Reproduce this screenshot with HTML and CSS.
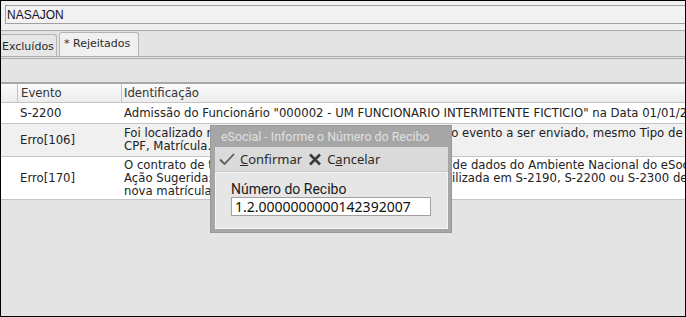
FILE: index.html
```html
<!DOCTYPE html>
<html lang="pt-BR">
  <head>
    <meta charset="UTF-8" />
    <title>eSocial - Eventos Rejeitados</title>
    <link rel="stylesheet" href="styles.css">
  </head>
  <body>
    <div class="frame">
      <div class="top">
        <input class="name-input" type="text" value="NASAJON" />
      </div>

      <div class="tabs">
        <div class="tab tab-cut">Excluídos</div>
        <div class="tab tab-active">* Rejeitados</div>
      </div>

      <div class="strip"></div>

      <div class="grid">
        <div class="grid-row grid-head">
          <div class="cell c-ind"></div>
          <div class="cell c-evt">Evento</div>
          <div class="cell c-id">Identificação</div>
        </div>
        <div class="grid-row row-1">
          <div class="cell c-ind"></div>
          <div class="cell c-evt">S-2200</div>
          <div class="cell c-id">Admissão do Funcionário "000002 - UM FUNCIONARIO INTERMITENTE FICTICIO" na Data 01/01/2019</div>
        </div>
        <div class="grid-row row-2 alt">
          <div class="cell c-ind"></div>
          <div class="cell c-evt">Erro[106]</div>
          <div class="cell c-id">Foi localizado nas bases de dados um registro do mesmo evento a ser enviado, mesmo Tipo de Inscrição,<br />CPF, Matrícula.</div>
        </div>
        <div class="grid-row row-3">
          <div class="cell c-ind"></div>
          <div class="cell c-evt">Erro[170]</div>
          <div class="cell c-id">O contrato de trabalho ainda não foi localizado na base de dados do Ambiente Nacional do eSocial.<br />Ação Sugerida: Verifique se a matrícula informada foi utilizada em S-2190, S-2200 ou S-2300 desta<br />nova matrícula.</div>
        </div>
      </div>

      <div class="dialog">
        <div class="dlg-title">eSocial - Informe o Número do Recibo</div>
        <div class="dlg-toolbar">
          <span class="dlg-btn">
            <svg width="16" height="12" viewBox="0 0 16 12"><path d="M1 6.5 L5.5 11 L15 1" fill="none" stroke="#5a5a5a" stroke-width="1.8"/></svg>
            <span><u>C</u>onfirmar</span>
          </span>
          <span class="dlg-btn">
            <svg width="14" height="13" viewBox="0 0 14 13"><path d="M2 1.5 L12 11.5 M12 1.5 L2 11.5" fill="none" stroke="#3c3c3c" stroke-width="2.6"/></svg>
            <span>C<u>a</u>ncelar</span>
          </span>
        </div>
        <div class="dlg-panel">
          <label class="dlg-label" for="recibo">Número do Recibo</label>
          <input class="dlg-input" id="recibo" type="text" value="1.2.0000000000142392007" />
        </div>
      </div>
    </div>
  </body>
</html>
```

FILE: styles.css
```css
body {
  margin: 0;
  padding: 0;
  background-color: #000;
}
.frame {
  position: relative;
  width: 686px;
  height: 317px;
  box-sizing: border-box;
  border: 1px solid #000;
  background-color: #e4e4e4;
  overflow: hidden;
  font-family: "DejaVu Sans", Verdana, sans-serif;
  font-size: 11px;
  color: #222;
}
.top {
  height: 30px;
  box-sizing: border-box;
  padding: 4px 0 0 4px;
  background-color: #f0f0f0;
  border-bottom: 1px solid #acacac;
}
.name-input {
  display: block;
  width: 700px;
  height: 19px;
  box-sizing: border-box;
  margin: 0;
  padding: 0 0 0 1px;
  border: 1px solid #a0a0a0;
  background-color: #f2f2f2;
  font-family: "Liberation Sans", Arial, sans-serif;
  font-size: 12px;
  color: #101028;
  outline: none;
}
.tabs {
  display: flex;
  align-items: flex-end;
  gap: 2px;
  height: 25px;
  border-bottom: 3px double #acacac;
}
.tab {
  height: 22px;
  box-sizing: border-box;
  border: 1px solid #b4b4b4;
  border-bottom: none;
  border-radius: 3px 3px 0 0;
  background-color: #e6e6e6;
  color: #2a2a2a;
  line-height: 22px;
}
.tab-cut {
  width: 58px;
  margin-left: -2px;
  padding-left: 2px;
  line-height: 24px;
}
.tab-active {
  height: 24px;
  width: 80px;
  padding-left: 4px;
  background-color: #f0f0f0;
  line-height: 21px;
}
.strip {
  height: 23px;
  border-bottom: 2px solid #a8a8a8;
}
.grid {
  font-size: 11.7px;
}
.grid-row {
  display: flex;
  border-bottom: 1px solid #c4c4c4;
  background-color: #fff;
}
.grid-head {
  height: 18px;
  background: linear-gradient(#fbfbfb, #ececec);
  color: #333;
}
.cell {
  display: flex;
  align-items: center;
  white-space: nowrap;
  box-sizing: border-box;
}
.c-ind {
  width: 17px;
  flex: none;
}
.c-evt {
  width: 104px;
  flex: none;
  padding-left: 2px;
}
.c-id {
  padding-left: 2px;
  line-height: 13px;
}
.grid-head .c-ind,
.grid-head .c-evt {
  border-right: 1px solid #c4c4c4;
}
.grid-head .c-evt {
  padding-left: 3px;
}
.row-1 {
  height: 20px;
}
.row-2 {
  height: 32px;
}
.row-3 {
  height: 42px;
}
.alt {
  background-color: #f0f0f0;
}

.dialog {
  position: absolute;
  left: 209px;
  top: 124px;
  width: 242px;
  height: 108px;
  box-sizing: border-box;
  background-color: #a6a6a6;
  border: 1px solid #999;
  padding: 0 3px 3px 4px;
  display: flex;
  flex-direction: column;
  font-family: "Noto Sans", "Open Sans", sans-serif;
}
.dlg-title {
  height: 21px;
  line-height: 21px;
  padding-left: 6px;
  font-family: Roboto, "Noto Sans", sans-serif;
  font-size: 12.4px;
  color: #e0e0e0;
  white-space: nowrap;
}
.dlg-toolbar {
  display: flex;
  align-items: center;
  gap: 6px;
  height: 24px;
  padding-left: 4px;
  background-color: #dadada;
  border-bottom: 1px solid #c8c8c8;
  font-size: 13px;
  color: #2a2a2a;
}
.dlg-btn {
  display: flex;
  align-items: center;
  gap: 5px;
}
.dlg-panel {
  flex: 1;
  display: flex;
  flex-direction: column;
  padding: 8px 0 0 15px;
  background-color: #e6e6e6;
  border: 1px solid #f4f4f4;
}
.dlg-label {
  font-family: Roboto, "Noto Sans", sans-serif;
  font-size: 14px;
  line-height: 16px;
  color: #1a1a1a;
}
.dlg-input {
  width: 200px;
  height: 19px;
  box-sizing: border-box;
  margin: 0;
  padding: 0 0 0 3px;
  border: 1px solid #a0a0a0;
  background-color: #fff;
  font-family: "Noto Sans", "Open Sans", sans-serif;
  font-size: 14px;
  line-height: 17px;
  color: #111;
  outline: none;
}
```
